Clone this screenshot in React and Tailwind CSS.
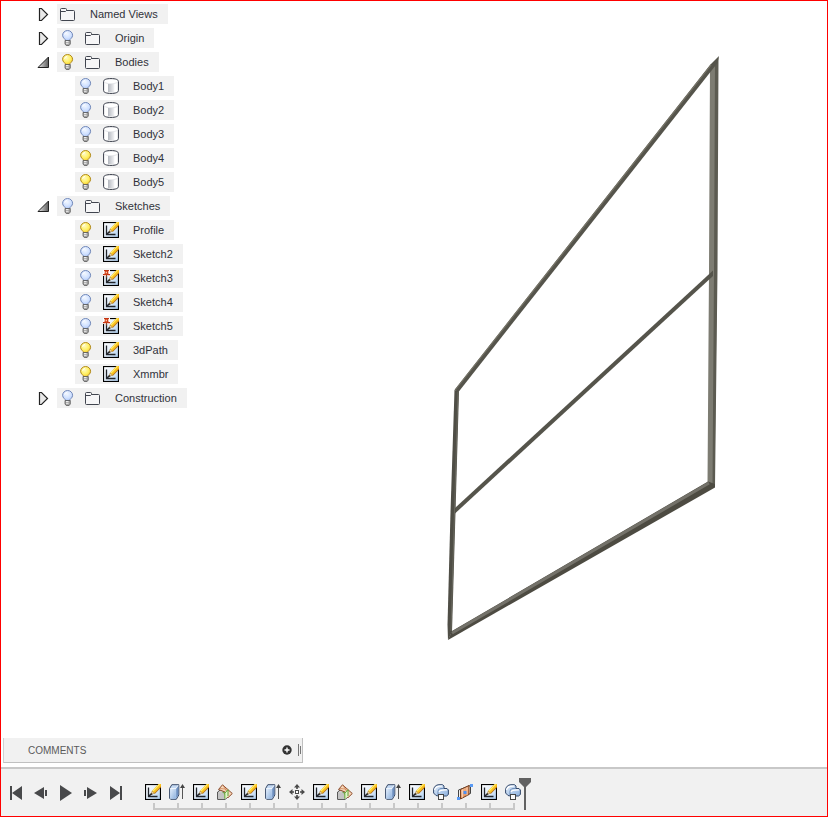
import { useState } from 'react';

const tree = [
  { name: 'Named Views', noBulb: true },
  { name: 'Origin' },
  {
    name: 'Bodies',
    on: true,
    open: true,
    kind: 'body',
    children: [
      { name: 'Body1' },
      { name: 'Body2' },
      { name: 'Body3' },
      { name: 'Body4', on: true },
      { name: 'Body5', on: true },
    ],
  },
  {
    name: 'Sketches',
    open: true,
    kind: 'sketch',
    children: [
      { name: 'Profile', on: true },
      { name: 'Sketch2' },
      { name: 'Sketch3', pinned: true },
      { name: 'Sketch4' },
      { name: 'Sketch5', pinned: true },
      { name: '3dPath', on: true },
      { name: 'Xmmbr', on: true },
    ],
  },
  { name: 'Construction' },
];

const features = [
  'sketch', 'extrude', 'sketch', 'project', 'sketch', 'extrude', 'move',
  'sketch', 'project', 'sketch', 'extrude', 'sketch', 'sweep', 'plane',
  'sketch', 'sweep',
];

function Gradients() {
  return (
    <svg className="absolute h-0 w-0" aria-hidden>
      <defs>
        <radialGradient id="bulbOn" cx="0.4" cy="0.35" r="0.7">
          <stop offset="0" stopColor="#fffbc0" />
          <stop offset="0.6" stopColor="#ffef62" />
          <stop offset="1" stopColor="#f2c72c" />
        </radialGradient>
        <radialGradient id="bulbOff" cx="0.45" cy="0.35" r="0.7">
          <stop offset="0" stopColor="#f1f7ff" />
          <stop offset="0.6" stopColor="#cfe0ff" />
          <stop offset="1" stopColor="#a9c3f5" />
        </radialGradient>
        <linearGradient id="cylinder" x1="0" x2="1">
          <stop offset="0" stopColor="#b4b8bf" />
          <stop offset="1" stopColor="#f4f4f6" />
        </linearGradient>
        <linearGradient id="paper" x1="0" y1="0" x2="1" y2="1">
          <stop offset="0" stopColor="#ffffff" />
          <stop offset="0.5" stopColor="#e3eefa" />
          <stop offset="1" stopColor="#a9cbee" />
        </linearGradient>
        <linearGradient id="corner" x1="0" y1="0" x2="1" y2="0">
          <stop offset="0" stopColor="#eeeeee" />
          <stop offset="1" stopColor="#5c5c5c" />
        </linearGradient>
        <linearGradient id="solid" x1="0" y1="0" x2="1" y2="1">
          <stop offset="0" stopColor="#e3eefb" />
          <stop offset="1" stopColor="#8db1de" />
        </linearGradient>
        <linearGradient id="copper" x1="0" y1="0" x2="1" y2="1">
          <stop offset="0" stopColor="#f9c7a2" />
          <stop offset="1" stopColor="#d47d48" />
        </linearGradient>
      </defs>
    </svg>
  );
}

function Bulb({ on }) {
  return (
    <svg width="12" height="16" viewBox="0 0 12 16" aria-hidden>
      <path
        d="M3.500 10.500C3.500 8.800.6 8.200.6 5.300a5 4.800 0 0 1 10 0C10.600 8.200 7.700 8.800 7.700 10.500Z"
        fill={on ? 'url(#bulbOn)' : 'url(#bulbOff)'}
        stroke={on ? '#b18a1e' : '#7288b8'}
      />
      <path d="M2.600 4.800a2.800 2.800 0 0 1 2.500-2.300" stroke="#fff" fill="none" />
      <path d="M3 10.500h5.300v3.500l-1.200 1.500h-2.900L3 14Z" fill="#a5a5a5" stroke="#5a5a5a" strokeWidth="0.800" />
      <path d="M4 11.500h2.500M4 13.300h2.500" stroke="#ededed" />
    </svg>
  );
}

function FolderIcon() {
  return (
    <svg width="16" height="16" viewBox="0 0 16 16" aria-hidden>
      <path
        d="M.5 13.500V3.500q0-1 1-1H5.500q1 0 1 1V4.500H13.500q1 0 1 1V13.500q0 1-1 1H1.500q-1 0-1-1Z"
        fill="#f6f6f7"
        stroke="#41454f"
      />
      <path d="M1 5.500h4.500l1-1" stroke="#41454f" fill="none" />
    </svg>
  );
}

function BodyIcon() {
  return (
    <svg width="16" height="16" viewBox="0 0 16 16" aria-hidden>
      <path
        d="M.6 3.500C.6 1.500 3.500.6 8 .6s7.400.9 7.400 2.900v9c0 2-2.900 2.900-7.400 2.900S.6 14.500.6 12.500Z"
        fill="#fff"
        stroke="#343946"
      />
      <path d="M5 6h6.500v8H5Z" fill="url(#cylinder)" />
      <path d="M1.200 4c1.500 1.300 4 1.700 6.800 1.700s5.300-.4 6.800-1.700" stroke="#d3d5da" strokeWidth="0.600" fill="none" />
    </svg>
  );
}

function SketchIcon({ pinned }) {
  return (
    <svg width="16" height="16" viewBox="0 0 16 16" aria-hidden>
      <rect x="0.5" y="0.5" width="15" height="15" fill="url(#paper)" stroke="#000" strokeWidth="1.200" />
      <path d="M3.500 3.500v9h9M3.800 12.200l3-3" stroke="#20242b" strokeWidth="1.300" fill="none" />
      <path d="M6 10.500l1.200-3.700L13.500 0H16v2.500L9.500 9.300Z" fill="#fbc21b" />
      <path d="M7.500 6.800L14 .3h1.200L8.300 7.600Z" fill="#fff07a" />
      <path d="M9.300 9.300L16 2.300v1.200L9.700 9.900Z" fill="#b96a08" />
      <path d="M6 10.500l1.200-3.500 2.200 2.200Z" fill="#f4d9a8" stroke="#7d5a2a" strokeWidth="0.400" />
      <path d="M5.600 10.900l.7-2 1.400 1.300Z" fill="#222" />
      {pinned && (
        <g>
          <path d="M0 0h7v6H0Z" fill="#fff" />
          <path d="M1 .7h5M0 4.600h7" stroke="#c33413" strokeWidth="1.300" />
          <path d="M2 1h3l.7 3.500H1.300Z" fill="#d2441a" />
          <path d="M2.800 1.800h1.200v1.500H2.600Z" fill="#ffc9b5" />
          <path d="M3.500 5v2.500" stroke="#8b4b2b" />
        </g>
      )}
    </svg>
  );
}

function ExtrudeIcon() {
  return (
    <svg width="16" height="16" viewBox="0 0 16 16" aria-hidden>
      <path d="M.6 4.500L2.800.7h7v10.300L7.300 15.300H1.600l-1-1Z" fill="#c5daf4" stroke="#394b68" />
      <path d="M1.200 4.800h5.600v9.900H1.700l-.5-.6Z" fill="url(#solid)" />
      <path d="M7.200 4.600L9.300 1.500v9.200L7.200 14.300Z" fill="#6c8fc0" />
      <path d="M1.300 4.500h5.700L9.200 1.200" stroke="#fff" strokeWidth="0.700" fill="none" />
      <path d="M13.500 15V1.500" stroke="#555" />
      <path d="M13.500 0l2.500 4h-5Z" fill="#444" />
    </svg>
  );
}

function ProjectIcon() {
  return (
    <svg width="16" height="16" viewBox="0 0 16 16" aria-hidden>
      <path d="M.6 8L4 5.500l7 2V13l-3 2.400H.6Z" fill="#d2d2d2" stroke="#4b4b4b" />
      <path d="M1.200 8.500H7V14.800H1.200Z" fill="#c3c3c3" />
      <path d="M5.500.8L15.300 9.500 11 13.700 8 11V8L1.500 5.500Z" fill="#f8d8ba" stroke="#8b4b2b" />
      <path d="M3 4.500l8 .8M6.500 2L10 8" stroke="#cf875c" strokeWidth="0.800" />
      <path d="M7.300 9.300L11 5.500v7l-3 2.500h-.7Z" fill="#e2f4c7" />
      <path d="M5.500 8.300l2.300.9L11 5.500M7.800 9.200v5.600M11 6v6" stroke="#4d9b24" strokeWidth="0.900" fill="none" />
    </svg>
  );
}

function MoveIcon() {
  return (
    <svg width="16" height="16" viewBox="0 0 16 16" fill="#4a4a4a" aria-hidden>
      <path d="M8 0l3 3.500H5ZM8 16l3-3.500H5ZM0 8l3.500-3v6ZM16 8l-3.500-3v6Z" />
      <path d="M7.200 3h1.600v2H7.200ZM7.200 11h1.600v2H7.200ZM3 7.200h2v1.600H3ZM11 7.200h2v1.600h-2Z" />
      <rect x="6.500" y="6.500" width="3" height="3" fill="#fff" stroke="#4a4a4a" />
    </svg>
  );
}

function SweepIcon() {
  return (
    <svg width="16" height="16" viewBox="0 0 16 16" aria-hidden>
      <path
        d="M.6 6C.6 3 3 .7 6 .7h3.500l1.500 1.300v2.500h3l1.400 1.500v4.500L13.500 12H10.500v-1.500H5.500V12L3 11.500.6 9Z"
        fill="url(#solid)"
        stroke="#33486b"
      />
      <path d="M1.500 6C2 3.500 5 2 9 2M5.500 8.300c1-2 4-2.500 8.500-2.300" stroke="#fff" strokeWidth="1.200" fill="none" />
      <path d="M11 4.500H8C5.500 4.700 4.800 6.500 5 9v2" stroke="#5a7cab" strokeWidth="0.800" fill="none" />
      <rect x="5.500" y="10.500" width="5" height="5" fill="#fafafa" stroke="#444" />
    </svg>
  );
}

function PlaneIcon() {
  return (
    <svg width="16" height="16" viewBox="0 0 16 16" aria-hidden>
      <path d="M1.500 14V6L13.500 1.500V9.500Z" fill="none" stroke="#444" />
      <path d="M3.500 5.500L12 1.500v9L3.500 15Z" fill="url(#copper)" stroke="#713b1c" />
      <path d="M5.500 5.500v8M10 3.500v8" stroke="#ffd8bd" strokeWidth="0.800" />
      <rect x="0" y="13" width="3" height="3" fill="#5a9bf5" />
      <rect x="6.500" y="7" width="3" height="3" fill="#4f91f3" />
      <rect x="13" y="0" width="3" height="3" fill="#5a9bf5" />
    </svg>
  );
}

const featureIcons = {
  sketch: SketchIcon,
  extrude: ExtrudeIcon,
  project: ProjectIcon,
  move: MoveIcon,
  sweep: SweepIcon,
  plane: PlaneIcon,
};

function Row({ item, kind }) {
  const [on, setOn] = useState(!!item.on);
  return (
    <div className={`flex h-5 items-center bg-[#f1f1f1] pr-[10px] ${item.noBulb ? 'pl-[3px]' : 'pl-[5px]'}`}>
      {!item.noBulb && (
        <button type="button" aria-label={`Toggle ${item.name}`} onClick={() => setOn(!on)} className="mr-[11px]">
          <Bulb on={on} />
        </button>
      )}
      {kind === 'body' && <BodyIcon />}
      {kind === 'sketch' && <SketchIcon pinned={item.pinned} />}
      {!kind && <FolderIcon />}
      <span className="ml-[14px] whitespace-nowrap text-[11px] leading-5">{item.name}</span>
    </div>
  );
}

function Branch({ item }) {
  const [open, setOpen] = useState(!!item.open);
  return (
    <li className="flex flex-col gap-1">
      <div className="flex">
        <button
          type="button"
          aria-label={`Expand ${item.name}`}
          aria-expanded={open}
          onClick={() => setOpen(!open)}
          className="flex w-5 items-center"
        >
          <svg width="14" height="16" viewBox="0 0 14 16" aria-hidden>
            {open ? (
              <path d="M1 13.500L11.500 3v10.500Z" fill="url(#corner)" stroke="#222" />
            ) : (
              <path d="M2.500 2.500h2L10.500 8.500l-6 6h-2Z" fill="#e9e9e9" stroke="#222" strokeWidth="1.200" />
            )}
          </svg>
        </button>
        <Row item={item} />
      </div>
      {open && item.children && (
        <ul className="ml-[38px] flex flex-col items-start gap-1">
          {item.children.map((child) => (
            <li key={child.name}>
              <Row item={child} kind={item.kind} />
            </li>
          ))}
        </ul>
      )}
    </li>
  );
}

function FrameModel() {
  return (
    <svg className="h-full w-full" viewBox="304 1 523 766" role="img" aria-label="Frame model">
      <path d="M710 65L717 61V270L714.500 487 707.500 483 709 270Z" fill="#7d7c72" />
      <path d="M715 62L718.500 57 717.500 270 715 487 712.500 485 714 270Z" fill="#5c5b51" />
      <path d="M454.500 390L710 65 719 56 717.500 63 458.500 392Z" fill="#55544b" />
      <path d="M455.500 389.500L711 65" stroke="#777569" strokeWidth="1.200" />
      <path d="M455 508L713 270.500V276L455 513.500Z" fill="#55544b" />
      <path d="M452 631L708 481.500 715 484V487.500L448 640Z" fill="#4d4b42" />
      <path d="M452 633L709 483" stroke="#74726a" strokeWidth="3" />
      <path d="M454.500 390L459 391.500 455.500 512 452 632 448 640 447.500 625 450.500 512Z" fill="#4f4e46" />
      <path d="M458 392L454.500 512 451 631" stroke="#68675d" fill="none" />
    </svg>
  );
}

const transport = [
  { label: 'Go to start', d: 'M2 1h2v14H2ZM14 1v14L4 8Z' },
  { label: 'Step back', d: 'M11 2v12L1 8ZM12 5h2v6h-2Z' },
  { label: 'Play', d: 'M2 0L14 8 2 16Z' },
  { label: 'Step forward', d: 'M1 5h2v6H1ZM4 2l10 6L4 14Z' },
  { label: 'Go to end', d: 'M2 1l10 7L2 15ZM12 1h2v14h-2Z' },
];

function Timeline() {
  return (
    <footer className="flex items-start border-t-2 border-[#c8c8c8] bg-[#f1f1f1] pb-1.5 pl-0.5">
      <div className="flex pt-4">
        {transport.map((t) => (
          <button key={t.label} type="button" aria-label={t.label} className="flex w-[25px] justify-center">
            <svg width="16" height="16" viewBox="0 0 16 16" fill="#48494b" aria-hidden>
              <path d={t.d} />
            </svg>
          </button>
        ))}
      </div>
      <ol className="ml-[13px] flex pt-[15px]">
        {features.map((name, i) => {
          const Icon = featureIcons[name];
          return (
            <li key={i} className="w-6">
              <button type="button" aria-label={name} className="mx-auto block">
                <Icon />
              </button>
              <div className="mt-[3px] flex h-[7px]">
                <span className={`w-3 border-[#c8c8c8] ${i > 0 ? 'border-b-2' : ''}`} />
                <span
                  className={`w-3 border-l-2 border-[#c8c8c8] ${i < features.length - 1 ? 'border-b-2' : ''}`}
                />
              </div>
            </li>
          );
        })}
      </ol>
      <svg className="-ml-1.5 mt-[9px]" width="12" height="32" viewBox="0 0 12 32" fill="#626262" aria-hidden>
        <path d="M0 0h12v4L7 9v23H5V9L0 4Z" />
      </svg>
    </footer>
  );
}

function App() {
  return (
    <div className="flex min-h-screen flex-col border border-[#ff0000] bg-white font-['Liberation_Sans',Arial,sans-serif] text-[#30323a]">
      <Gradients />
      <main className="flex flex-1">
        <aside className="flex w-[303px] shrink-0 flex-col justify-between pb-1">
          <ul className="flex flex-col gap-1 pl-9 pt-[3px]">
            {tree.map((item) => (
              <Branch key={item.name} item={item} />
            ))}
          </ul>
          <div className="ml-0.5 mr-px flex h-[25px] items-center border border-t-0 border-b-[#c0c0c0] border-l-[#d0d0d0] border-r-[#c0c0c0] bg-[#f1f1f1] pl-6">
            <h2 className="flex-1 text-[10px] text-[#5a5a5a]">COMMENTS</h2>
            <button type="button" aria-label="Add comment">
              <svg width="10" height="10" viewBox="0 0 10 10" aria-hidden>
                <circle cx="5" cy="5" r="4.700" fill="#333" />
                <path d="M5 2.500v5M2.500 5h5" stroke="#fff" strokeWidth="1.400" />
              </svg>
            </button>
            <svg className="ml-1.5" width="4" height="12" viewBox="0 0 4 12" aria-hidden>
              <path d="M.5 0v12M2.500 2v8" stroke="#777" />
            </svg>
          </div>
        </aside>
        <section className="min-w-0 flex-1">
          <FrameModel />
        </section>
      </main>
      <Timeline />
    </div>
  );
}

export default App;
